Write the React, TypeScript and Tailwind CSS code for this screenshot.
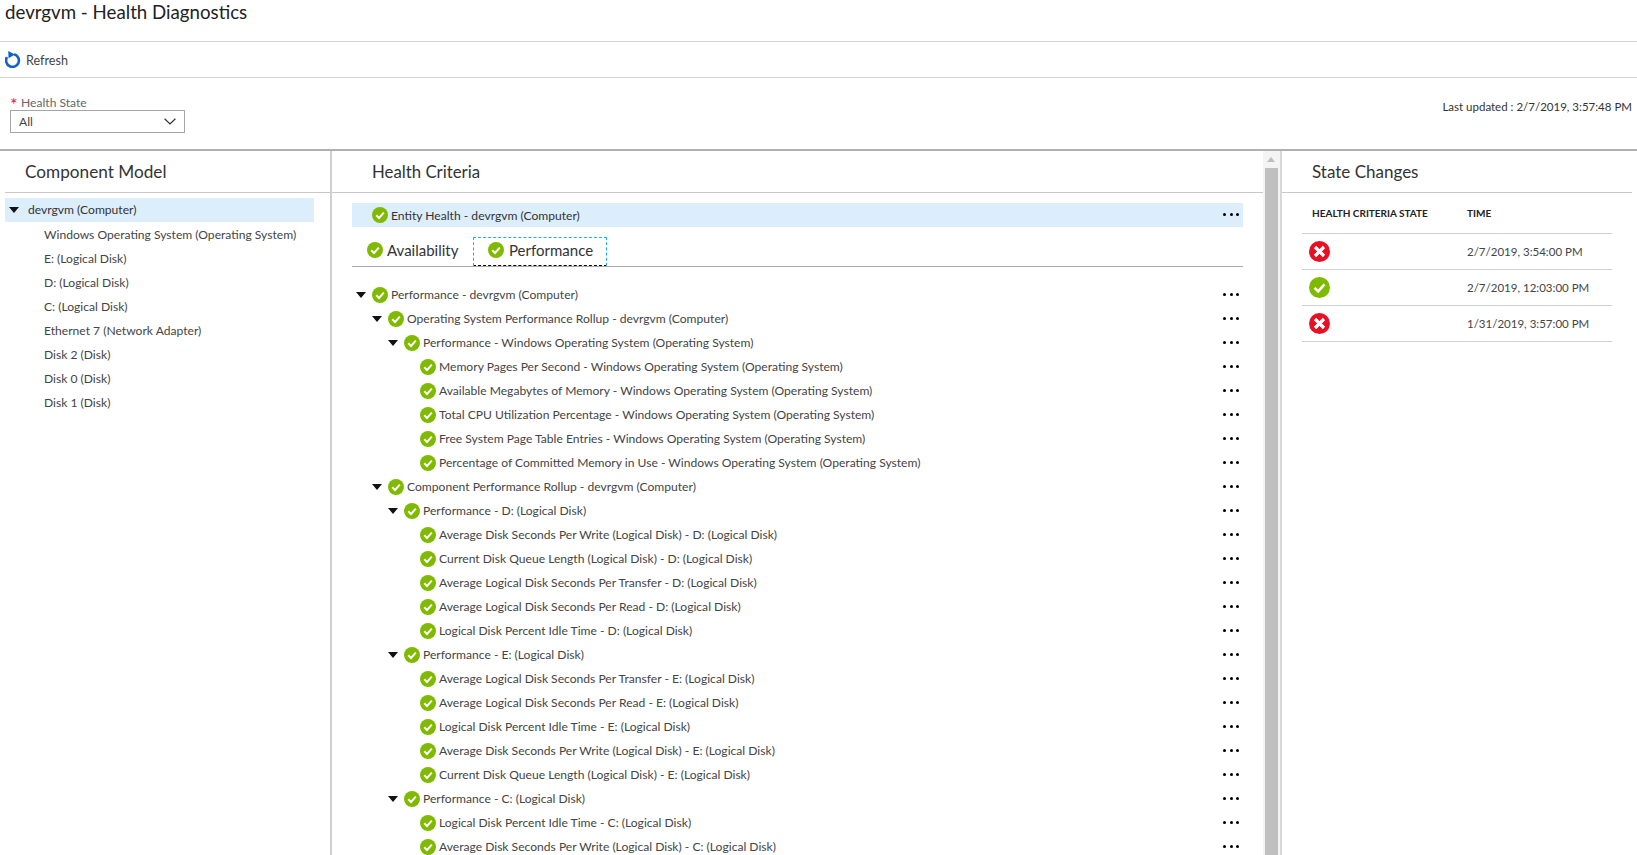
const FONT = "font-['Lato','Noto_Sans',sans-serif]";

function Check({ size = 16 }: { size?: number }) {
  return (
    <svg width={size} height={size} viewBox="0 0 16 16" className="shrink-0">
      <circle cx="8" cy="8" r="8" fill="#7fba00" />
      <path d="M4.2 8.3 L7 11 L11.8 5.6" fill="none" stroke="#fff" strokeWidth="2" />
    </svg>
  );
}

function Err() {
  return (
    <svg width="21" height="21" viewBox="0 0 21 21" className="shrink-0">
      <circle cx="10.5" cy="10.5" r="10.5" fill="#e81123" />
      <path d="M6 6 L15 15 M15 6 L6 15" fill="none" stroke="#fff" strokeWidth="3.2" />
    </svg>
  );
}

function Arrow() {
  return (
    <svg width="10" height="6" viewBox="0 0 10 6" className="shrink-0">
      <path d="M0 0 H10 L5 6 Z" fill="#111" />
    </svg>
  );
}

function Dots() {
  return (
    <div className="flex gap-[3.5px] shrink-0 mb-[1px]">
      <span className="w-[3px] h-[3px] rounded-full bg-black" />
      <span className="w-[3px] h-[3px] rounded-full bg-black" />
      <span className="w-[3px] h-[3px] rounded-full bg-black" />
    </div>
  );
}

const tree: [number, boolean, string][] = [
  [0, true, "Performance - devrgvm (Computer)"],
  [1, true, "Operating System Performance Rollup - devrgvm (Computer)"],
  [2, true, "Performance - Windows Operating System (Operating System)"],
  [3, false, "Memory Pages Per Second - Windows Operating System (Operating System)"],
  [3, false, "Available Megabytes of Memory - Windows Operating System (Operating System)"],
  [3, false, "Total CPU Utilization Percentage - Windows Operating System (Operating System)"],
  [3, false, "Free System Page Table Entries - Windows Operating System (Operating System)"],
  [3, false, "Percentage of Committed Memory in Use - Windows Operating System (Operating System)"],
  [1, true, "Component Performance Rollup - devrgvm (Computer)"],
  [2, true, "Performance - D: (Logical Disk)"],
  [3, false, "Average Disk Seconds Per Write (Logical Disk) - D: (Logical Disk)"],
  [3, false, "Current Disk Queue Length (Logical Disk) - D: (Logical Disk)"],
  [3, false, "Average Logical Disk Seconds Per Transfer - D: (Logical Disk)"],
  [3, false, "Average Logical Disk Seconds Per Read - D: (Logical Disk)"],
  [3, false, "Logical Disk Percent Idle Time - D: (Logical Disk)"],
  [2, true, "Performance - E: (Logical Disk)"],
  [3, false, "Average Logical Disk Seconds Per Transfer - E: (Logical Disk)"],
  [3, false, "Average Logical Disk Seconds Per Read - E: (Logical Disk)"],
  [3, false, "Logical Disk Percent Idle Time - E: (Logical Disk)"],
  [3, false, "Average Disk Seconds Per Write (Logical Disk) - E: (Logical Disk)"],
  [3, false, "Current Disk Queue Length (Logical Disk) - E: (Logical Disk)"],
  [2, true, "Performance - C: (Logical Disk)"],
  [3, false, "Logical Disk Percent Idle Time - C: (Logical Disk)"],
  [3, false, "Average Disk Seconds Per Write (Logical Disk) - C: (Logical Disk)"],
];

const indent = ["pl-[4px]", "pl-[20px]", "pl-[36px]", "pl-[68px]"];

const components = [
  "Windows Operating System (Operating System)",
  "E: (Logical Disk)",
  "D: (Logical Disk)",
  "C: (Logical Disk)",
  "Ethernet 7 (Network Adapter)",
  "Disk 2 (Disk)",
  "Disk 0 (Disk)",
  "Disk 1 (Disk)",
];

const changes: [boolean, string][] = [
  [false, "2/7/2019, 3:54:00 PM"],
  [true, "2/7/2019, 12:03:00 PM"],
  [false, "1/31/2019, 3:57:00 PM"],
];

export default function App() {
  return (
    <div className={`${FONT} w-[1637px] h-[855px] overflow-hidden bg-white text-[12.1px] text-[#444] flex flex-col`}>
      <header className="h-[42px] shrink-0 border-b border-[#d4d4d4] pl-[5px] text-[18.7px] leading-[25px] text-[#222]">
        devrgvm - Health Diagnostics
      </header>

      <div className="h-[36px] shrink-0 border-b border-[#d4d4d4] pl-[5px] flex items-center gap-[5px]">
        <svg width="16" height="17" viewBox="0 0 16 17" className="shrink-0">
          <path d="M9.2 3.3 A6.4 6.4 0 1 1 2 6.2" fill="none" stroke="#0f62d0" strokeWidth="2.6" />
          <path d="M3.2 0 L10 3.6 L3.6 7.2 Z" fill="#0f62d0" />
        </svg>
        <span className="pt-[3px] text-[12.6px]">Refresh</span>
      </div>

      <div className="h-[73px] shrink-0 border-b-2 border-[#b0b0b0] pl-[10px] pr-[5px] flex justify-between">
        <div className="pt-[16px]">
          <div className="flex items-center h-[16px] gap-[5px] text-[#666]">
            <span className="text-[#e81123] w-[6px] text-[18px] leading-[16px] pt-[3px]">*</span>
            <span className="pt-[2px]">Health State</span>
          </div>
          <div className="w-[175px] h-[23px] border border-[#a6a6a6] flex items-center justify-between pl-[8px] pr-[8px]">
            <span className="pt-[1px]">All</span>
            <svg width="12" height="7" viewBox="0 0 12 7">
              <path d="M0.6 0.8 L6 6 L11.4 0.8" fill="none" stroke="#333" strokeWidth="1.2" />
            </svg>
          </div>
        </div>
        <div className="pt-[20px] text-[#333] text-[11.5px]">Last updated : 2/7/2019, 3:57:48 PM</div>
      </div>

      <div className="flex-1 flex min-h-0">
        <section className="w-[330px] shrink-0 border-r-2 border-[#d0d0d0] box-content">
          <div className="ml-[5px] h-[42px] border-b border-[#c8c8c8] pl-[20px] pt-[1px] flex items-center text-[17.2px] text-[#333]">
            Component Model
          </div>
          <div className="mt-[5px] ml-[5px] w-[309px]">
            <div className="h-[24px] bg-[#dcedfc] flex items-center pl-[4px] gap-[9px] text-[#333]">
              <Arrow />
              <span className="pt-[1px]">devrgvm (Computer)</span>
            </div>
            {components.map((c) => (
              <div key={c} className="h-[24px] flex items-center pl-[39px] pt-[2px] whitespace-nowrap">
                {c}
              </div>
            ))}
          </div>
        </section>

        <section className="w-[931px] shrink-0 min-w-0">
          <div className="h-[42px] border-b border-[#c8c8c8] pl-[40px] pt-[1px] flex items-center text-[16.8px] text-[#333]">
            Health Criteria
          </div>
          <div className="mx-[20px] mt-[10px]">
            <div className="h-[24px] bg-[#dcedfc] flex items-center pl-[20px] pr-[4px] text-[#333]">
              <Check />
              <span className="ml-[3px] flex-1 pt-[2px]">Entity Health - devrgvm (Computer)</span>
              <Dots />
            </div>
            <div className="h-[40px] border-b border-[#aaaaaa] flex items-end text-[15px] text-[#333]">
              <div className="h-[29px] flex items-center pl-[15px] gap-[4px] w-[121px] pb-[3px]">
                <Check />
                <span>Availability</span>
              </div>
              <div className="h-[29px] w-[134px] flex items-center pl-[14px] gap-[5px] pb-[3px] border border-dashed border-[#19b5e6] border-b-black">
                <Check />
                <span>Performance</span>
              </div>
            </div>
            <div className="mt-[16px]">
              {tree.map(([lvl, hasArrow, text], i) => (
                <div key={i} className={`h-[24px] flex items-center pr-[4px] ${indent[lvl]}`}>
                  {hasArrow && <Arrow />}
                  <span className={hasArrow ? "ml-[6px]" : ""}>
                    <Check />
                  </span>
                  <span className="ml-[3px] flex-1 whitespace-nowrap pt-[1px]">{text}</span>
                  <Dots />
                </div>
              ))}
            </div>
          </div>
        </section>

        <div className="w-[19px] shrink-0 flex flex-col items-center bg-[#f4f4f4] border-r-2 border-[#d8d8d8] pr-[1px]">
          <div className="h-[17px] flex items-center">
            <svg width="8" height="5" viewBox="0 0 8 5"><path d="M0 5 L4 0 L8 5 Z" fill="#bdbdbd" /></svg>
          </div>
          <div className="w-[13px] flex-1 bg-[#bfbfbf]" />
        </div>

        <section className="flex-1 min-w-0">
          <div className="mr-[5px] h-[42px] border-b border-[#c8c8c8] pl-[30px] pt-[1px] flex items-center text-[17px] text-[#333]">
            State Changes
          </div>
          <div className="ml-[20px] mr-[25px]">
            <div className="h-[41px] flex items-center border-b border-[#d0d0d0] text-[10px] font-bold text-[#222]">
              <span className="ml-[10px] w-[155px]">HEALTH CRITERIA STATE</span>
              <span>TIME</span>
            </div>
            {changes.map(([ok, t]) => (
              <div key={t} className="h-[36px] flex items-center border-b border-[#d0d0d0]">
                <span className="ml-[7px] w-[158px]">{ok ? <Check size={21} /> : <Err />}</span>
                <span className="pt-[1px] text-[11.5px]">{t}</span>
              </div>
            ))}
          </div>
        </section>
      </div>
    </div>
  );
}
